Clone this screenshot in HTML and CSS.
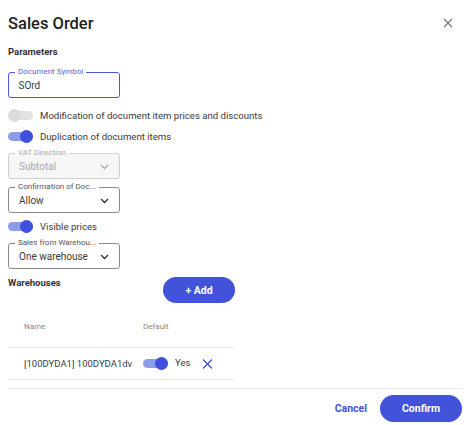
FILE: index.html
```html
<!DOCTYPE html>
<html lang="en">
<head>
    <meta charset="UTF-8">
    <meta name="viewport" content="width=device-width, initial-scale=1.0">
    <title>Sales Order</title>
    <link rel="stylesheet" href="styles.css">
</head>
<body>

<div class="dialog">
    <div class="header">
        <h2 class="title">Sales Order</h2>
        <span class="close">
            <svg width="10" height="10" viewBox="0 0 10 10"><path d="M1 1L9 9M9 1L1 9" stroke="#7a7a7a" stroke-width="1.3" fill="none"/></svg>
        </span>
    </div>

    <div class="section-title">Parameters</div>

    <div class="field focused">
        <span class="field-label">Document Symbol</span>
        <span class="field-value">SOrd</span>
    </div>

    <div class="switch-row first">
        <span class="switch"><span class="knob"></span></span>
        <span class="switch-text">Modification of document item prices and discounts</span>
    </div>
    <div class="switch-row">
        <span class="switch on"><span class="knob"></span></span>
        <span class="switch-text">Duplication of document items</span>
    </div>

    <div class="field select disabled vat">
        <span class="field-label">VAT Direction</span>
        <span class="field-value">Subtotal</span>
        <svg class="chevron" width="9" height="6" viewBox="0 0 9 6"><path d="M1 1L4.5 4.5L8 1" stroke="#aaa" stroke-width="1.3" fill="none"/></svg>
    </div>

    <div class="field select conf">
        <span class="field-label">Confirmation of Doc...</span>
        <span class="field-value">Allow</span>
        <svg class="chevron" width="9" height="6" viewBox="0 0 9 6"><path d="M1 1L4.5 4.5L8 1" stroke="#333" stroke-width="1.3" fill="none"/></svg>
    </div>

    <div class="switch-row visible">
        <span class="switch on"><span class="knob"></span></span>
        <span class="switch-text">Visible prices</span>
    </div>

    <div class="field select sales">
        <span class="field-label">Sales from Warehou...</span>
        <span class="field-value">One warehouse</span>
        <svg class="chevron" width="9" height="6" viewBox="0 0 9 6"><path d="M1 1L4.5 4.5L8 1" stroke="#333" stroke-width="1.3" fill="none"/></svg>
    </div>

    <div class="warehouses-head">
        <div class="section-title wh">Warehouses</div>
        <button class="add-button">+ Add</button>
    </div>

    <div class="table">
        <div class="table-row table-head">
            <div class="cell name">Name</div>
            <div class="cell">Default</div>
        </div>
        <div class="table-row">
            <div class="cell name">[100DYDA1] 100DYDA1dv</div>
            <div class="cell default-cell">
                <span class="switch on"><span class="knob"></span></span>
                <span class="yes">Yes</span>
                <svg class="remove" width="11" height="10" viewBox="0 0 11 10"><path d="M1 0.5L10 9.5M10 0.5L1 9.5" stroke="#4353d9" stroke-width="1.4" fill="none"/></svg>
            </div>
        </div>
    </div>

    <div class="footer">
        <button class="cancel-button">Cancel</button>
        <button class="confirm-button">Confirm</button>
    </div>
</div>

</body>
</html>
```

FILE: styles.css
```css
body {
    font-family: Roboto, "Liberation Sans", sans-serif;
    background-color: #fff;
    margin: 0;
    color: #333;
}
.dialog {
    padding: 0 8px;
}
.header {
    display: flex;
    justify-content: space-between;
    align-items: center;
    height: 46px;
}
.title {
    margin: 0;
    font-size: 16.5px;
    font-weight: 500;
    color: #222;
}
.close {
    display: flex;
    margin-right: 13px;
}
.section-title {
    font-size: 9.5px;
    font-weight: 700;
    line-height: 12px;
    color: #333;
}
.field {
    position: relative;
    box-sizing: border-box;
    width: 112px;
    height: 26px;
    border: 1px solid #8a8a8a;
    border-radius: 3px;
    display: flex;
    align-items: center;
    padding-left: 10px;
    margin-top: 8px;
}
.field.focused {
    margin-top: 14px;
    border: 1.5px solid #4a5ad9;
    padding-left: 9.5px;
}
.field-label {
    position: absolute; /* sits over the top border */
    left: 6px;
    top: -6px;
    padding: 0 3px;
    background: #fff;
    font-size: 8px;
    line-height: 10px;
    color: #555;
}
.focused .field-label {
    color: #5565e0;
}
.field-value {
    font-size: 10px;
    color: #3a3a3a;
}
.select .chevron {
    position: absolute;
    right: 10px;
    top: 10px;
}
.disabled {
    border-color: #cfcfcf;
    background: #f6f6f6;
}
.disabled .field-label {
    color: #aaa;
    background: linear-gradient(to bottom, #fff 50%, #f6f6f6 50%);
}
.disabled .field-value {
    color: #a8a8a8;
}
.field.vat {
    margin-top: 6px;
}
.field.sales {
    margin-top: 6px;
}
.switch-row {
    display: flex;
    align-items: center;
    height: 21px;
}
.switch-row.first {
    margin-top: 7px;
}
.switch-row.visible {
    margin-top: 3px;
}
.switch {
    position: relative;
    display: inline-block;
    width: 25px;
    height: 9px;
    border-radius: 5px;
    background: #e2e2e2;
    flex-shrink: 0;
}
.knob {
    position: absolute;
    top: -2px;
    left: 0;
    width: 13px;
    height: 13px;
    border-radius: 50%;
    background: #dcdcdc;
}
.switch.on {
    background: #8e9be8;
}
.switch.on .knob {
    left: 12px;
    background: #3f50dc;
}
.switch-text {
    margin-left: 7px;
    font-size: 9.6px;
    color: #3a3a3a;
}
.warehouses-head {
    display: flex;
    align-items: flex-start;
    margin-top: 8px;
}
.section-title.wh {
    width: 155px;
}
.add-button, .confirm-button {
    border: none;
    border-radius: 13px;
    background: #4353d9;
    color: #fff;
    font-family: Roboto, "Liberation Sans", sans-serif;
    font-size: 10.5px;
    font-weight: 700;
    height: 26px;
    cursor: pointer;
}
.add-button {
    width: 72px;
}
.table {
    width: 227px;
}
.table-row {
    display: grid;
    grid-template-columns: 135px 1fr;
    align-items: center;
    height: 31px;
    border-bottom: 1px solid #e9e9e9;
}
.table-head {
    height: 45px;
    align-items: end;
    padding-bottom: 14px;
    box-sizing: border-box;
}
.table-head .cell {
    font-size: 8px;
    color: #888;
    line-height: 12px;
}
.cell {
    font-size: 9.5px;
    color: #3a3a3a;
}
.cell.name {
    padding-left: 16px;
}
.default-cell {
    display: flex;
    align-items: center;
}
.yes {
    margin-left: 7px;
    margin-top: -3px;
}
.remove {
    margin-left: 12px;
}
.footer {
    display: flex;
    justify-content: flex-end;
    align-items: center;
    margin-top: 8px;
    margin-right: 4px;
    padding-top: 6px;
    border-top: 1px solid #e9e9e9;
}
.cancel-button {
    border: none;
    background: none;
    padding: 0;
    margin-right: 13px;
    color: #4353d9;
    font-family: Roboto, "Liberation Sans", sans-serif;
    font-size: 10.5px;
    font-weight: 700;
    cursor: pointer;
}
.confirm-button {
    width: 82px;
    height: 27px;
    border-radius: 14px;
}
```
